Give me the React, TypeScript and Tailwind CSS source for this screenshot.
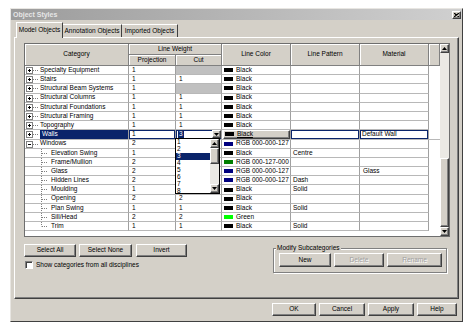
import React from "react";

type Row = {
  name: string;
  depth: 0 | 1;
  toggle?: "+" | "-";
  proj: string;
  cut: string | null;
  color: string;
  swatch: string;
  pattern?: string;
  material?: string;
  last?: boolean;
  selected?: boolean;
};

// cut values under the open list are hidden by it, so they are left blank
const rows: Row[] = [
  { name: "Specialty Equipment", depth: 0, toggle: "+", proj: "1", cut: null, color: "Black", swatch: "#000" },
  { name: "Stairs", depth: 0, toggle: "+", proj: "1", cut: "1", color: "Black", swatch: "#000" },
  { name: "Structural Beam Systems", depth: 0, toggle: "+", proj: "1", cut: null, color: "Black", swatch: "#000" },
  { name: "Structural Columns", depth: 0, toggle: "+", proj: "1", cut: "1", color: "Black", swatch: "#000" },
  { name: "Structural Foundations", depth: 0, toggle: "+", proj: "1", cut: "1", color: "Black", swatch: "#000" },
  { name: "Structural Framing", depth: 0, toggle: "+", proj: "1", cut: "1", color: "Black", swatch: "#000" },
  { name: "Topography", depth: 0, toggle: "+", proj: "1", cut: "1", color: "Black", swatch: "#000" },
  { name: "Walls", depth: 0, toggle: "+", proj: "1", cut: "3", color: "Black", swatch: "#000", material: "Default Wall", selected: true },
  { name: "Windows", depth: 0, toggle: "-", proj: "2", cut: "", color: "RGB 000-000-127", swatch: "#00007f" },
  { name: "Elevation Swing", depth: 1, proj: "1", cut: "", color: "Black", swatch: "#000", pattern: "Centre" },
  { name: "Frame/Mullion", depth: 1, proj: "2", cut: "", color: "RGB 000-127-000", swatch: "#007f00" },
  { name: "Glass", depth: 1, proj: "2", cut: "", color: "RGB 000-000-127", swatch: "#00007f", material: "Glass" },
  { name: "Hidden Lines", depth: 1, proj: "2", cut: "", color: "RGB 000-000-127", swatch: "#00007f", pattern: "Dash" },
  { name: "Moulding", depth: 1, proj: "1", cut: "", color: "Black", swatch: "#000", pattern: "Solid" },
  { name: "Opening", depth: 1, proj: "2", cut: "2", color: "Black", swatch: "#000" },
  { name: "Plan Swing", depth: 1, proj: "1", cut: "1", color: "Black", swatch: "#000", pattern: "Solid" },
  { name: "Sill/Head", depth: 1, proj: "2", cut: "2", color: "Green", swatch: "#00ff00" },
  { name: "Trim", depth: 1, proj: "1", cut: "1", color: "Black", swatch: "#000", pattern: "Solid", last: true },
];

const cols = "grid grid-cols-[104px_47px_46px_69px_69px_69px_11px]";
const btn =
  "flex items-center justify-center bg-[#d4d0c8] border border-t-white border-l-white border-r-[#404040] border-b-[#404040] shadow-[inset_-1px_-1px_0_#808080] text-[6.5px] leading-none whitespace-nowrap";
const cell = "flex items-center border-r border-[#a0a0a0] h-full overflow-hidden whitespace-nowrap";

function Arrow({ up }: { up?: boolean }) {
  return (
    <div className={`${btn} w-[9px] h-[9px] shrink-0`}>
      <svg width="5" height="3">
        <path d={up ? "M0 3 L2.5 0 L5 3 Z" : "M0 0 L5 0 L2.5 3 Z"} fill="#000" />
      </svg>
    </div>
  );
}

function Tree({ row }: { row: Row }) {
  if (row.depth === 0) {
    return (
      <svg width="15" height="8" className="shrink-0">
        <line x1="8" y1="4.5" x2="13" y2="4.5" stroke="#808080" strokeDasharray="1 1" />
        <rect x="1.5" y="1.5" width="6" height="6" fill="#fff" stroke="#808080" />
        <line x1="3" y1="4.5" x2="6" y2="4.5" stroke="#000" />
        {row.toggle === "+" && <line x1="4.5" y1="3" x2="4.5" y2="6" stroke="#000" />}
      </svg>
    );
  }
  return (
    <svg width="26" height="9" className="shrink-0 self-start">
      <line x1="16.5" y1="0" x2="16.5" y2={row.last ? 4.5 : 9} stroke="#808080" strokeDasharray="1 1" />
      <line x1="17" y1="4.5" x2="23" y2="4.5" stroke="#808080" strokeDasharray="1 1" />
    </svg>
  );
}

function Swatch({ c }: { c: string }) {
  return <span className="w-[9px] h-[4px] shrink-0 mr-[3px]" style={{ background: c }} />;
}

function DataRow({ row }: { row: Row }) {
  if (row.selected) {
    return (
      <div className={`${cols} h-[9.2px] border-b border-[#b8b8b8]`}>
        <div className={cell}>
          <Tree row={row} />
          <span className="flex-1 h-full flex items-center bg-[#0a246a] text-white pl-[2px]">{row.name}</span>
        </div>
        <div className={`${cell} pl-[3px] shadow-[inset_0_0_0_1px_#0a246a]`}>{row.proj}</div>
        <div className={`${cell} pl-[2px] shadow-[inset_0_0_0_1px_#0a246a] justify-between`}>
          <span className="bg-[#0a246a] text-white px-[1px] h-[7px] flex items-center">{row.cut}</span>
          <div className={`${btn} w-[9px] h-[8px]`}>
            <svg width="5" height="3">
              <path d="M0 0 L5 0 L2.5 3 Z" fill="#000" />
            </svg>
          </div>
        </div>
        <div className={`${cell} pl-[1px]`}>
          <div className={`${btn} justify-start flex-1 h-full pl-[1px]`}>
            <Swatch c={row.swatch} />
            <span className="underline">{row.color}</span>
          </div>
        </div>
        <div className={`${cell} shadow-[inset_0_0_0_1px_#0a246a]`} />
        <div className={`${cell} pl-[2px] shadow-[inset_0_0_0_1px_#0a246a]`}>{row.material}</div>
        <div className="bg-white" />
      </div>
    );
  }
  return (
    <div className={`${cols} h-[9.2px]`}>
      <div className={`${cell} border-b border-b-[#b8b8b8]`}>
        <Tree row={row} />
        <span>{row.name}</span>
      </div>
      <div className={`${cell} border-b border-b-[#b8b8b8] pl-[3px]`}>{row.proj}</div>
      <div className={`${cell} border-b border-b-[#b8b8b8] pl-[3px] ${row.cut === null ? "bg-[#c0c0c0]" : ""}`}>
        {row.cut}
      </div>
      <div className={`${cell} border-b border-b-[#b8b8b8] pl-[2px]`}>
        <Swatch c={row.swatch} />
        {row.color}
      </div>
      <div className={`${cell} border-b border-b-[#b8b8b8] pl-[2px]`}>{row.pattern}</div>
      <div className={`${cell} border-b border-b-[#b8b8b8] pl-[3px]`}>{row.material}</div>
      <div className="bg-white" />
    </div>
  );
}

function Header() {
  const h =
    "flex items-center justify-center border-r border-b border-[#808080] shadow-[inset_1px_1px_0_#fff] bg-[#d4d0c8]";
  return (
    <div className={`${cols} grid-rows-[11px_11px]`}>
      <div className={`${h} row-span-2`}>Category</div>
      <div className={`${h} col-span-2`}>Line Weight</div>
      <div className={`${h} row-span-2`}>Line Color</div>
      <div className={`${h} row-span-2`}>Line Pattern</div>
      <div className={`${h} row-span-2`}>Material</div>
      <div className={`${h} row-span-2`} />
      <div className={h}>Projection</div>
      <div className={h}>Cut</div>
    </div>
  );
}

function Dropdown() {
  const items = ["1", "2", "3", "4", "5", "6", "7", "8"];
  return (
    <div className="absolute left-[150px] top-[94px] w-[45px] h-[56px] bg-white border border-black flex">
      <div className="flex-1 flex flex-col overflow-hidden">
        {items.map((n) => (
          <div
            key={n}
            className={`h-[7px] shrink-0 flex items-center pl-[1px] ${n === "3" ? "bg-[#0a246a] text-white" : ""}`}
          >
            {n}
          </div>
        ))}
      </div>
      <div className="w-[9px] flex flex-col bg-[#ebe9e4]">
        <Arrow up />
        <div className={`${btn} h-[16px]`} />
        <div className="flex-1" />
        <Arrow />
      </div>
    </div>
  );
}

export default function App() {
  return (
    <div className="w-[474px] h-[332px] bg-white pt-[8px] pl-[10px] font-[family-name:Liberation_Sans,Arial,sans-serif] text-[6.5px] leading-none text-black whitespace-nowrap">
      <div className="w-[453px] h-[314px] bg-[#d4d0c8] border border-t-[#e8e6e2] border-l-[#e8e6e2] border-r-[#404040] border-b-[#404040] flex flex-col">
        {/* title bar */}
        <div className="h-[11px] flex items-center justify-between bg-gradient-to-r from-[#9c9c9c] to-[#d0d0d0] pl-[2px] pr-[1px]">
          <span className="text-[7px] font-bold text-[#e6e6e6]">Object Styles</span>
          <div className={`${btn} w-[9px] h-[8px]`}>
            <svg width="5" height="4">
              <path d="M0 0 L5 4 M5 0 L0 4" stroke="#000" strokeWidth="1.2" />
            </svg>
          </div>
        </div>

        {/* tabs */}
        <div className="mt-[2px] h-[15px] flex items-end pl-[5px]">
          <div className="relative z-10 -mb-px h-[16px] w-[47px] flex items-center justify-center bg-[#d4d0c8] border-t border-l border-r border-t-white border-l-white border-r-[#404040] pb-[1px]">
            Model Objects
          </div>
          <div className="h-[13px] w-[59px] flex items-center justify-center border-t border-r border-t-white border-r-[#404040]">
            Annotation Objects
          </div>
          <div className="h-[13px] w-[56px] flex items-center justify-center border-t border-r border-t-white border-r-[#404040]">
            Imported Objects
          </div>
        </div>

        {/* panel */}
        <div className="mx-[3px] h-[262px] border border-t-white border-l-white border-r-[#404040] border-b-[#404040] shadow-[inset_-1px_-1px_0_#808080] pl-[9px] pt-[5px]">
          <div className="relative w-[426px] h-[194px] border border-[#6e6e6e] bg-white flex">
            <div className="w-[415px] flex flex-col">
              <Header />
              {rows.map((r) => (
                <DataRow key={r.name} row={r} />
              ))}
            </div>
            <div className="w-[9px] flex flex-col bg-[#ebe9e4]">
              <Arrow up />
              <div className="h-[105px]" />
              <div className={`${btn} flex-1`} />
              <Arrow />
            </div>
            <Dropdown />
          </div>

          <div className="mt-[7px] flex">
            <div className="w-[249px] flex flex-col">
              <div className="flex gap-[3px]">
                <div className={`${btn} w-[52px] h-[13px]`}>Select All</div>
                <div className={`${btn} w-[53px] h-[13px]`}>Select None</div>
                <div className={`${btn} w-[51px] h-[13px] ml-[1px]`}>Invert</div>
              </div>
              <div className="mt-[4px] flex items-center">
                <div className="w-[8px] h-[8px] ml-[1px] bg-white border border-t-[#808080] border-l-[#808080] border-r-white border-b-white shadow-[inset_1px_1px_0_#404040]" />
                <span className="ml-[3px]">Show categories from all disciplines</span>
              </div>
            </div>
            <div className="relative w-[174px] h-[28px] mt-[1px]">
              <div className="absolute inset-x-0 top-[3px] bottom-0 border border-[#808080] shadow-[1px_1px_0_#fff,inset_1px_1px_0_#fff]" />
              <span className="absolute left-[3px] top-0 px-[1px] bg-[#d4d0c8]">Modify Subcategories</span>
              <div className="absolute left-[6px] top-[8px] flex gap-[3px]">
                <div className={`${btn} w-[52px] h-[14px]`}>New</div>
                <div className={`${btn} w-[50px] h-[14px] text-[#a0a0a0] [text-shadow:1px_1px_0_#fff]`}>Delete</div>
                <div className={`${btn} w-[55px] h-[14px] text-[#a0a0a0] [text-shadow:1px_1px_0_#fff]`}>Rename</div>
              </div>
            </div>
          </div>
        </div>

        {/* dialog buttons */}
        <div className="mt-[4px] flex justify-end gap-[3px] pr-[5px]">
          <div className={`${btn} w-[44px] h-[13px]`}>OK</div>
          <div className={`${btn} w-[46px] h-[13px]`}>Cancel</div>
          <div className={`${btn} w-[46px] h-[13px]`}>Apply</div>
          <div className={`${btn} w-[40px] h-[13px]`}>Help</div>
        </div>
      </div>
    </div>
  );
}
